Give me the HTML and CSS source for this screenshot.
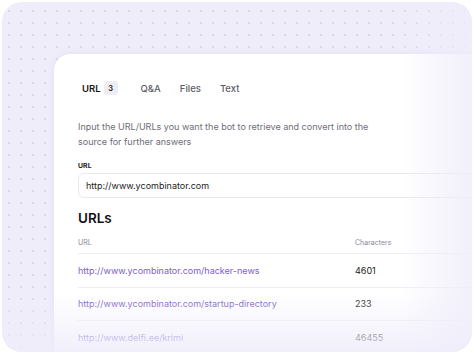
FILE: index.html
```html
<!DOCTYPE html>
<html>
<head>
<meta charset="utf-8">
<link rel="stylesheet" href="styles.css">
</head>
<body>
<div class="panel">
  <div class="card">
    <div class="tabs">
      <div class="tab active">URL <span class="badge">3</span></div>
      <div class="tab">Q&amp;A</div>
      <div class="tab">Files</div>
      <div class="tab">Text</div>
    </div>
    <p class="desc">Input the URL/URLs you want the bot to retrieve and convert into the source for further answers</p>
    <div class="label">URL</div>
    <div class="input">http://www.ycombinator.com</div>
    <h2 class="heading">URLs</h2>
    <div class="table">
      <div class="row head"><span class="c1">URL</span><span class="c2">Characters</span></div>
      <div class="row"><span class="c1 link">http://www.ycombinator.com/hacker-news</span><span class="c2">4601</span></div>
      <div class="row"><span class="c1 link">http://www.ycombinator.com/startup-directory</span><span class="c2">233</span></div>
      <div class="row"><span class="c1 link">http://www.delfi.ee/krimi</span><span class="c2">46455</span></div>
    </div>
  </div>
  <div class="fade-right"></div>
  <div class="fade-bottom"></div>
</div>
</body>
</html>
```
FILE: styles.css
```css
* { box-sizing: border-box; }
html, body { margin: 0; padding: 0; background: #ffffff; }
body { width: 474px; height: 355px; overflow: hidden; font-family: Inter, "Noto Sans", sans-serif; }
.panel {
  position: relative;
  margin: 2px 0 0 2px;
  width: 470px;
  height: 350px;
  border-radius: 20px;
  overflow: hidden;
  background-color: #efedfa;
  background-image: radial-gradient(circle, #dcd7f1 0.8px, transparent 1.2px);
  background-size: 12px 12px;
  background-position: 1px 3px;
  padding: 52px 0 0 52px;
}
.card {
  background: #ffffff;
  border-radius: 16px 0 0 0;
  height: 320px;
  width: 430px;
  padding: 26px 0 0 24px;
  box-shadow: 0 0 6px rgba(140, 120, 200, 0.12);
}
.tabs { display: flex; align-items: center; height: 16px; margin-left: 4px; }
.tab { font-size: 9.5px; color: #5d5d66; font-weight: 500; margin-right: 19px; display: flex; align-items: center; }
.tab.active { color: #16161a; font-weight: 600; margin-right: 23px; }
.badge {
  display: inline-flex; align-items: center; justify-content: center;
  width: 14px; height: 14px; margin-left: 3px;
  background: #ededf3; border-radius: 3px;
  font-size: 7.5px; font-weight: 600; color: #222;
}
.desc { margin: 23px 0 0 0; width: 310px; font-size: 9px; line-height: 15px; color: #6e6e78; }
.label { margin-top: 12px; font-size: 6.8px; font-weight: 700; color: #222; letter-spacing: 0.1px; }
.input {
  margin-top: 3px; height: 25px; width: 410px;
  border: 1px solid #e8e8ee; border-radius: 6px;
  padding: 0 0 0 7px; display: flex; align-items: center;
  font-size: 9px; color: #1c1c22;
}
.heading { margin: 10px 0 0 0; font-size: 13.5px; font-weight: 600; color: #111116; line-height: 20px; }
.table { margin-top: 5px; width: 410px; }
.row { display: flex; align-items: center; height: 33.5px; border-bottom: 1px solid #efeff3; font-size: 9px; color: #1c1c22; }
.row.head { height: 21px; font-size: 7px; color: #8a8a94; align-items: flex-start; padding-top: 5px; }
.c1 { width: 277px; }
.link { color: #7c61c8; }
.fade-right {
  position: absolute; top: 0; right: 0; width: 70px; height: 100%;
  background: linear-gradient(to right, rgba(239,237,250,0), rgba(239,237,250,0.55) 60%, rgba(239,237,250,0.85));
  pointer-events: none;
}
.fade-bottom {
  position: absolute; left: 0; bottom: 0; width: 100%; height: 60px;
  background: linear-gradient(to bottom, rgba(239,237,250,0), rgba(239,237,250,0.6) 70%, rgba(239,237,250,0.9));
  pointer-events: none;
}
```
